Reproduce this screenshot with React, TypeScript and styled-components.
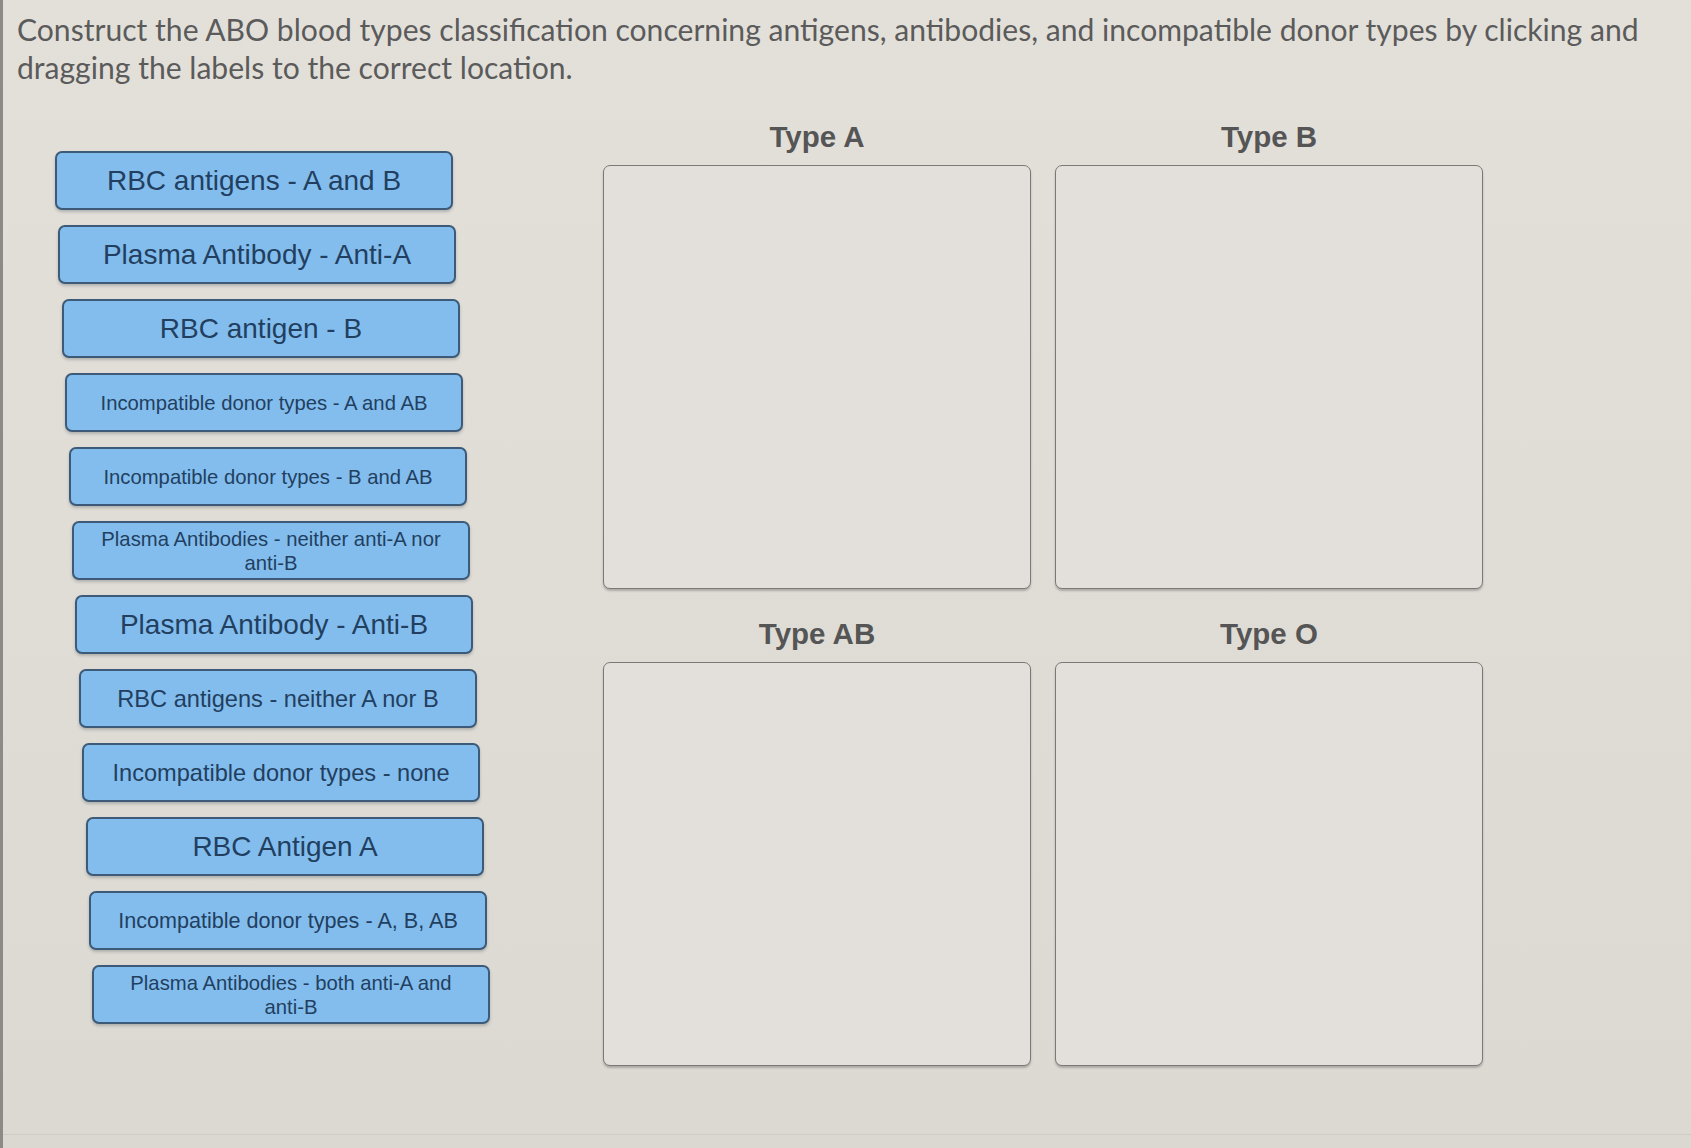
import React from 'react';
import styled, { createGlobalStyle } from 'styled-components';

type LabelSize = 'lg' | 'md' | 'sm' | 'xs';

interface ILabel {
  lines: string[];
  size: LabelSize;
}

const labels: ILabel[] = [
  { lines: ['RBC antigens - A and B'], size: 'lg' },
  { lines: ['Plasma Antibody - Anti-A'], size: 'lg' },
  { lines: ['RBC antigen - B'], size: 'lg' },
  { lines: ['Incompatible donor types - A and AB'], size: 'xs' },
  { lines: ['Incompatible donor types - B and AB'], size: 'xs' },
  { lines: ['Plasma Antibodies - neither anti-A nor', 'anti-B'], size: 'xs' },
  { lines: ['Plasma Antibody - Anti-B'], size: 'lg' },
  { lines: ['RBC antigens - neither A nor B'], size: 'md' },
  { lines: ['Incompatible donor types - none'], size: 'md' },
  { lines: ['RBC Antigen A'], size: 'lg' },
  { lines: ['Incompatible donor types - A, B, AB'], size: 'sm' },
  { lines: ['Plasma Antibodies - both anti-A and', 'anti-B'], size: 'xs' },
];

// top row boxes sit a little taller than the bottom row
const zoneRows: { name: string; height: number }[][] = [
  [
    { name: 'Type A', height: 424 },
    { name: 'Type B', height: 424 },
  ],
  [
    { name: 'Type AB', height: 404 },
    { name: 'Type O', height: 404 },
  ],
];

const fontSizes: Record<LabelSize, number> = {
  lg: 28,
  md: 23.6,
  sm: 21.6,
  xs: 20.3,
};

const GlobalStyle = createGlobalStyle`
  html, body {
    margin: 0;
    padding: 0;
    background: #e0ddd7;
  }
  * {
    box-sizing: border-box;
  }
`;

const Page = styled.div`
  width: 1691px;
  height: 1148px;
  overflow: hidden;
  background: linear-gradient(180deg, #e3e0da 0%, #dfdcd6 60%, #dcd9d3 100%);
  border-left: 3px solid #8c8a86;
  display: flex;
  flex-direction: column;
`;

const Prompt = styled.p`
  margin: 0;
  padding: 10px 0 0 14px;
  width: 1672px;
  font-family: Lato, 'Open Sans', sans-serif;
  font-size: 30.1px;
  line-height: 38px;
  color: #5b5b5b;
`;

const Workspace = styled.div`
  display: flex;
  align-items: flex-start;
  flex: 1;
`;

const LabelBank = styled.div`
  display: flex;
  flex-direction: column;
  gap: 15px;
  padding: 65px 0 0 52px;
  width: 600px;
`;

const DragLabel = styled.div<{ $size: LabelSize; $shift: number }>`
  width: 398px;
  height: 59px;
  margin-left: ${({ $shift }) => $shift}px;
  display: flex;
  flex-direction: column;
  align-items: center;
  justify-content: center;
  padding: 0 10px;
  background: #82bdee;
  border: 2px solid #3d5b78;
  border-radius: 7px;
  box-shadow: 0 2px 3px rgba(40, 50, 60, 0.25);
  font-family: 'Liberation Sans', Arial, sans-serif;
  font-size: ${({ $size }) => fontSizes[$size]}px;
  line-height: 24px;
  color: #233f5f;
  text-align: center;
  white-space: nowrap;
  cursor: grab;
  user-select: none;
`;

const ZoneGrid = styled.div`
  display: grid;
  grid-template-columns: 428px 428px;
  column-gap: 24px;
  row-gap: 27px;
  padding-top: 33px;
`;

const Zone = styled.div`
  display: flex;
  flex-direction: column;
  gap: 10px;
`;

const ZoneTitle = styled.div`
  height: 36px;
  text-align: center;
  font-family: 'Liberation Sans', Arial, sans-serif;
  font-weight: 700;
  font-size: 29.5px;
  line-height: 36px;
  color: #555555;
`;

const DropBox = styled.div<{ $height: number }>`
  height: ${({ $height }) => $height}px;
  border: 1.5px solid #7a7976;
  border-radius: 7px;
  background: #e3e0db;
  box-shadow: 0 2px 2px rgba(60, 60, 60, 0.3);
`;

const ScreenEdge = styled.div`
  height: 14px;
  border-top: 1px solid #cfccc6;
  background: #dbd8d2;
`;

const App: React.FC = () => (
  <>
    <GlobalStyle />
    <Page>
      <Prompt>
        Construct the ABO blood types classification concerning antigens, antibodies, and
        incompatible donor types by clicking and dragging the labels to the correct location.
      </Prompt>
      <Workspace>
        <LabelBank>
          {labels.map((label, i) => (
            <DragLabel key={label.lines.join(' ')} $size={label.size} $shift={Math.round(i * 3.4)}>
              {label.lines.map((line) => (
                <span key={line}>{line}</span>
              ))}
            </DragLabel>
          ))}
        </LabelBank>
        <ZoneGrid>
          {zoneRows.flat().map((zone) => (
            <Zone key={zone.name}>
              <ZoneTitle>{zone.name}</ZoneTitle>
              <DropBox $height={zone.height} />
            </Zone>
          ))}
        </ZoneGrid>
      </Workspace>
      <ScreenEdge />
    </Page>
  </>
);

export default App;
